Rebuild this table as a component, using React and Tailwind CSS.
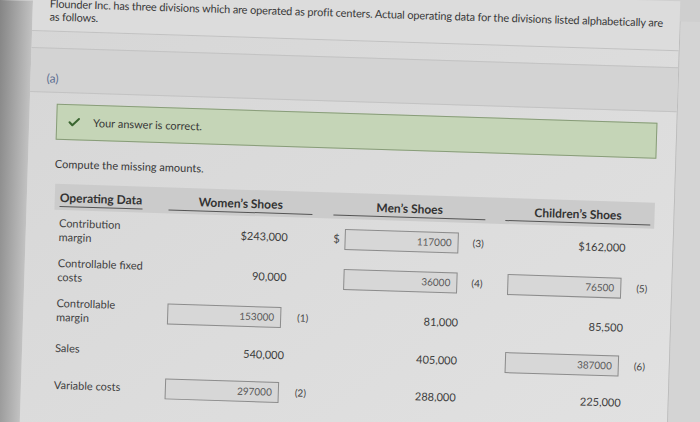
import React from 'react';
import { Check } from 'lucide-react';

const rows = [
  {
    label: ['Contribution', 'margin'],
    h: 'h-[40px]',
    women: { value: '$243,000' },
    men: { input: '117000', mark: '(3)', dollar: true },
    kids: { value: '$162,000' },
  },
  {
    label: ['Controllable fixed', 'costs'],
    h: 'h-[40px]',
    women: { value: '90,000' },
    men: { input: '36000', mark: '(4)' },
    kids: { input: '76500', mark: '(5)' },
  },
  {
    label: ['Controllable', 'margin'],
    h: 'h-[40px]',
    women: { input: '153000', mark: '(1)' },
    men: { value: '81,000' },
    kids: { value: '85,500' },
  },
  {
    label: ['Sales'],
    h: 'h-[36px]',
    women: { value: '540,000' },
    men: { value: '405,000' },
    kids: { input: '387000', mark: '(6)' },
  },
  {
    label: ['Variable costs'],
    h: 'h-[38px]',
    women: { input: '297000', mark: '(2)' },
    men: { value: '288,000' },
    kids: { value: '225,000' },
  },
];

// one amount cell: either a plain number or a filled answer box
const Amount = ({ cell }) => {
  if (cell.input) {
    return (
      <div className="w-[114px] h-[21px] border border-[#8c8c8c] bg-[#d7d7d7] text-right pr-[6px] text-[10px] leading-[19px] text-[#5a5a5a]">
        {cell.input}
      </div>
    );
  }
  return <div className="text-right text-[11px] text-[#3c3c3c]">{cell.value}</div>;
};

const Mark = ({ cell }) => (
  <div className="pl-[12px] text-[10px] text-[#444]">{cell.mark || ''}</div>
);

const App = () => {
  return (
    <div className="w-[700px] h-[422px] overflow-hidden bg-[#b9b9b9] font-['Lato','Liberation_Sans',sans-serif]">
      {/* photo is slightly tilted, so the whole sheet is rotated */}
      <div className="-ml-[40px] -mt-[40px] w-[800px] h-[520px] pl-[40px] pt-[40px] rotate-[1.8deg] origin-[40px_40px] flex bg-[#cfcfcf]">
        <div className="w-[33px] h-full bg-gradient-to-r from-[#858585] via-[#a3a3a3] to-[#c2c2c2]" />

        <div className="w-[648px] h-full flex flex-col bg-gradient-to-br from-[#d6d6d6] via-[#dcdcdc] to-[#e2e2e2] border-r border-[#bdbdbd]">
          <div className="-mt-[20px] h-[50px] bg-[#dcdcdc] border-b border-[#c2c2c2] pl-[17px] pt-[15px]">
            <div className="whitespace-nowrap text-[11px] tracking-[-0.15px] leading-[13px] text-[#383838]">
              Flounder Inc. has three divisions which are operated as profit centers. Actual operating data for the divisions listed alphabetically are
              <br />
              as follows.
            </div>
          </div>

          <div className="h-[16px]" />

          <div className="h-[45px] bg-[#d3d3d3] border-y border-[#c3c3c3] pl-[16px] pt-[16px]">
            <span className="text-[12px] leading-[16px] text-[#5e6f92]">(a)</span>
          </div>

          <div className="pl-[27px] pt-[11px]">
            <div className="w-[601px] h-[36px] bg-[#c5d5b7] border border-[#889c79] flex items-center">
              <Check size={14} strokeWidth={3.5} className="ml-[10px] text-[#3a6530]" />
              <span className="ml-[12px] text-[11px] text-[#363636]">Your answer is correct.</span>
            </div>

            <div className="mt-[17px] text-[11px] leading-[14px] text-[#363636]">Compute the missing amounts.</div>

            <div className="mt-[13px] ml-[1px] w-[600px]">
              <div className="h-[26px] bg-[#cbcbcb] flex items-end pb-[3px] text-[12px] font-bold text-[#333]">
                <div className="w-[114px] pl-[5px]">
                  <span className="inline-block leading-[15px] pb-[1px] border-b border-[#555]">Operating Data</span>
                </div>
                <div className="w-[144px] text-center leading-[15px] pb-[1px] border-b border-[#555]">Women’s Shoes</div>
                <div className="ml-[21px] w-[152px] text-center leading-[15px] pb-[1px] border-b border-[#555]">Men’s Shoes</div>
                <div className="ml-[20px] w-[145px] text-center leading-[15px] pb-[1px] border-b border-[#555]">Children’s Shoes</div>
              </div>

              {rows.map((row) => (
                <div
                  key={row.label.join(' ')}
                  className={`${row.h} grid grid-cols-[116px_118px_41px_16px_116px_48px_117px_28px] items-center`}
                >
                  <div className="pl-[5px] text-[11px] leading-[14px] text-[#404040]">
                    {row.label.map((l) => (
                      <div key={l}>{l}</div>
                    ))}
                  </div>
                  <Amount cell={row.women} />
                  <Mark cell={row.women} />
                  <div className="text-center text-[11px] text-[#444]">{row.men.dollar ? '$' : ''}</div>
                  <Amount cell={row.men} />
                  <Mark cell={row.men} />
                  <Amount cell={row.kids} />
                  <Mark cell={row.kids} />
                </div>
              ))}
            </div>
          </div>
        </div>

        <div className="flex-1 h-full bg-[#d4d4d4]" />
      </div>
    </div>
  );
};

export default App;
